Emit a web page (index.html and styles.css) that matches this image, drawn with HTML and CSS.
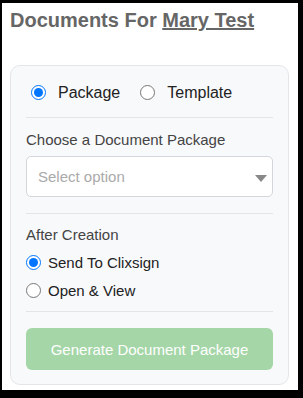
FILE: index.html
```html
<!DOCTYPE html>
<html lang="en">
<head>
    <meta charset="UTF-8">
    <meta name="viewport" content="width=device-width, initial-scale=1.0">
    <title>Documents For Mary Test</title>
    <link rel="stylesheet" href="styles.css">
</head>
<body>
    <div class="container">
        <h2 class="page-title">Documents For <a href="#" class="client-link">Mary Test</a></h2>

        <div class="doc-card">
            <!-- Package / Template switch -->
            <div class="type-row">
                <label class="type-option">
                    <input type="radio" name="docType" value="package" checked>
                    <span>Package</span>
                </label>
                <label class="type-option">
                    <input type="radio" name="docType" value="template">
                    <span>Template</span>
                </label>
            </div>

            <!-- Package select -->
            <div class="card-section">
                <label class="field-label">Choose a Document Package</label>
                <div class="select-box">
                    <span class="select-placeholder">Select option</span>
                    <span class="select-caret"></span>
                </div>
            </div>

            <!-- After creation -->
            <div class="card-section after-section">
                <div class="field-label">After Creation</div>
                <label class="after-option">
                    <input type="radio" name="after" value="send" checked>
                    <span>Send To Clixsign</span>
                </label>
                <label class="after-option">
                    <input type="radio" name="after" value="open">
                    <span>Open &amp; View</span>
                </label>
            </div>

            <div class="card-section action-section">
                <button class="generate-btn" disabled>Generate Document Package</button>
            </div>
        </div>
    </div>
</body>
</html>
```

FILE: styles.css
```css
* {
    margin: 0;
    padding: 0;
    box-sizing: border-box;
    font-family: "Liberation Sans", Arial, sans-serif;
}

html {
    background: #000;
}

body {
    margin: 3px 5px 8px 2px;
    height: 387px;
    background: #fff;
}

.container {
    padding: 6px 9px 0 8px;
}

.page-title {
    font-size: 20px;
    line-height: 23px;
    font-weight: bold;
    color: #666;
    margin-bottom: 33px;
}

.client-link {
    color: #666;
    text-decoration: underline;
}

.doc-card {
    background: #f8f9fb;
    border: 1px solid #e3e5e8;
    border-radius: 10px;
    padding: 0 15px 14px;
}

.type-row {
    display: flex;
    align-items: center;
    height: 52px;
    padding-top: 2px;
    border-bottom: 1px solid #e3e5e8;
}

.type-option {
    display: flex;
    align-items: center;
    font-size: 16px;
    color: #222;
    margin-right: 20px;
}

.type-option input {
    width: 15px;
    height: 15px;
    margin: 0 12px 0 5px;
}

.type-option + .type-option input {
    margin-left: 0;
}

.card-section {
    padding: 13px 0 16px;
    border-bottom: 1px solid #e3e5e8;
}

.field-label {
    display: block;
    font-size: 15px;
    line-height: 17px;
    color: #444;
    margin-bottom: 8px;
}

.select-box {
    display: flex;
    align-items: center;
    justify-content: space-between;
    height: 41px;
    padding: 0 5px 0 11px;
    background: #fff;
    border: 1px solid #d3d6da;
    border-radius: 5px;
}

.select-placeholder {
    font-size: 15px;
    color: #aaa;
}

.select-caret {
    width: 0;
    height: 0;
    margin-top: 4px;
    border-left: 6px solid transparent;
    border-right: 6px solid transparent;
    border-top: 7px solid #888;
}

.after-section {
    padding: 12px 0 7px;
}

.after-section .field-label {
    margin-bottom: 5px;
}

.after-option {
    display: flex;
    align-items: center;
    height: 28px;
    font-size: 15px;
    color: #222;
}

.after-option input {
    width: 15px;
    height: 15px;
    margin: 0 7px 0 0;
}

.action-section {
    padding: 16px 0 0;
    border-bottom: none;
}

.generate-btn {
    width: 100%;
    height: 42px;
    background: #a5d6a7;
    color: #fff;
    border: none;
    border-radius: 6px;
    font-size: 15px;
}
```
